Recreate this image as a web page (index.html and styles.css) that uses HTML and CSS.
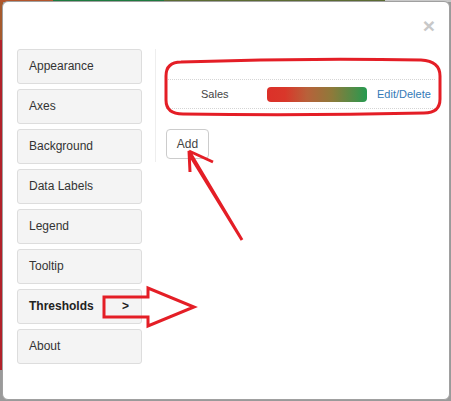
FILE: index.html
```html
<!DOCTYPE html>
<html lang="en">
<head>
    <meta charset="UTF-8">
    <title>Format options</title>
    <link rel="stylesheet" href="styles.css">
</head>
<body>
    <div class="backdrop">
        <div class="modal">
            <div class="modal-header">
                <span class="close">&times;</span>
            </div>
            <div class="modal-body">
                <ul class="menu">
                    <li class="menu-item">Appearance</li>
                    <li class="menu-item">Axes</li>
                    <li class="menu-item">Background</li>
                    <li class="menu-item">Data Labels</li>
                    <li class="menu-item">Legend</li>
                    <li class="menu-item">Tooltip</li>
                    <li class="menu-item active">Thresholds <span class="caret">&gt;</span></li>
                    <li class="menu-item">About</li>
                </ul>
                <div class="panel">
                    <div class="threshold-head"></div>
                    <div class="threshold-row">
                        <span class="series">Sales</span>
                        <span class="color-bar"></span>
                        <a class="edit-link" href="#">Edit/Delete</a>
                    </div>
                    <button class="add-btn">Add</button>
                </div>
            </div>
        </div>

        <!-- annotations drawn on top of the screenshot -->
        <svg class="marks" width="451" height="401" viewBox="0 0 451 401">
            <path d="M 181 62 Q 300 58 421 60 Q 440 61 440 76 L 440 99 Q 440 113 424 113 Q 300 116 183 114 Q 166 114 166 100 L 166 76 Q 166 62 181 62 Z"/>
            <path d="M 242 240 L 189 151 L 190 172 M 189 151 L 213 162 M 242 240 L 191 157"/>
            <path d="M 104 297 L 148 297 L 148 288 L 194 307 L 148 326 L 148 317 L 104 317 Z"/>
        </svg>
    </div>
</body>
</html>
```

FILE: styles.css
```css
html, body {
    margin: 0;
    padding: 0;
}
body {
    font-family: "Liberation Sans", Arial, sans-serif;
    font-size: 12px;
    color: #333;
}
.backdrop {
    position: relative;
    width: 451px;
    height: 401px;
    box-sizing: border-box;
    padding: 1px 1px 1px 2px;
    background:
        linear-gradient(to right, #b3552b 0 53px, #1d7a3f 53px 164px, #5b6b33 164px 385px, #c9c9c9 385px) top left / 100% 2px no-repeat,
        linear-gradient(to bottom, #a65a2c 0 40px, #b2222a 40px 370px, #9a9a9a 370px) top left / 3px 100% no-repeat,
        #9a9a9a;
}
.modal {
    height: 100%;
    box-sizing: border-box;
    background: #fff;
    border: 1px solid #a0a0a0;
    border-radius: 6px;
}
.modal-header {
    height: 47px;
    display: flex;
    justify-content: flex-end;
    align-items: flex-start;
    padding-right: 14px;
}
.close {
    margin-top: 14px;
    font-size: 21px;
    font-weight: bold;
    line-height: 20px;
    color: #c8c8c8;
}
.modal-body {
    display: flex;
    align-items: flex-start;
    padding: 0 14px 0 14px;
}
.menu {
    list-style: none;
    margin: 0;
    padding: 0;
    width: 125px;
    display: flex;
    flex-direction: column;
    gap: 5px;
}
.menu-item {
    height: 33px;
    line-height: 33px;
    padding-left: 11px;
    background: #f4f4f4;
    border: 1px solid #ddd;
    border-radius: 3px;
    color: #333;
    position: relative;
}
.menu-item.active {
    font-weight: bold;
    color: #222;
}
.caret {
    position: absolute;
    left: 104px;
    top: 0;
}
.panel {
    flex: 1;
    margin-left: 13px;
    padding: 0 0 3px 10px;
    border-left: 1px solid #eee;
}
.threshold-head {
    height: 30px;
}
.threshold-row {
    display: flex;
    align-items: center;
    height: 28px;
    border-top: 1px dotted #d5d5d5;
    border-bottom: 1px dotted #d5d5d5;
    font-size: 11px;
}
.series {
    width: 66px;
    padding-left: 35px;
    color: #444;
}
.color-bar {
    width: 100px;
    height: 15px;
    border-radius: 4px;
    background: linear-gradient(to right, #dc3029 0%, #d9372a 18%, #b8613a 40%, #8e7a3a 65%, #4c8e48 88%, #249a50 100%);
}
.edit-link {
    margin-left: 10px;
    color: #337ab7;
    text-decoration: none;
}
.add-btn {
    margin-top: 20px;
    height: 30px;
    width: 43px;
    padding: 0;
    font-family: inherit;
    font-size: 12px;
    color: #444;
    background: #fff;
    border: 1px solid #ccc;
    border-radius: 4px;
}
.marks {
    position: absolute;
    left: 0;
    top: 0;
    pointer-events: none;
    fill: none;
    stroke: #e41e26;
    stroke-width: 3;
    stroke-linejoin: miter;
}
```
